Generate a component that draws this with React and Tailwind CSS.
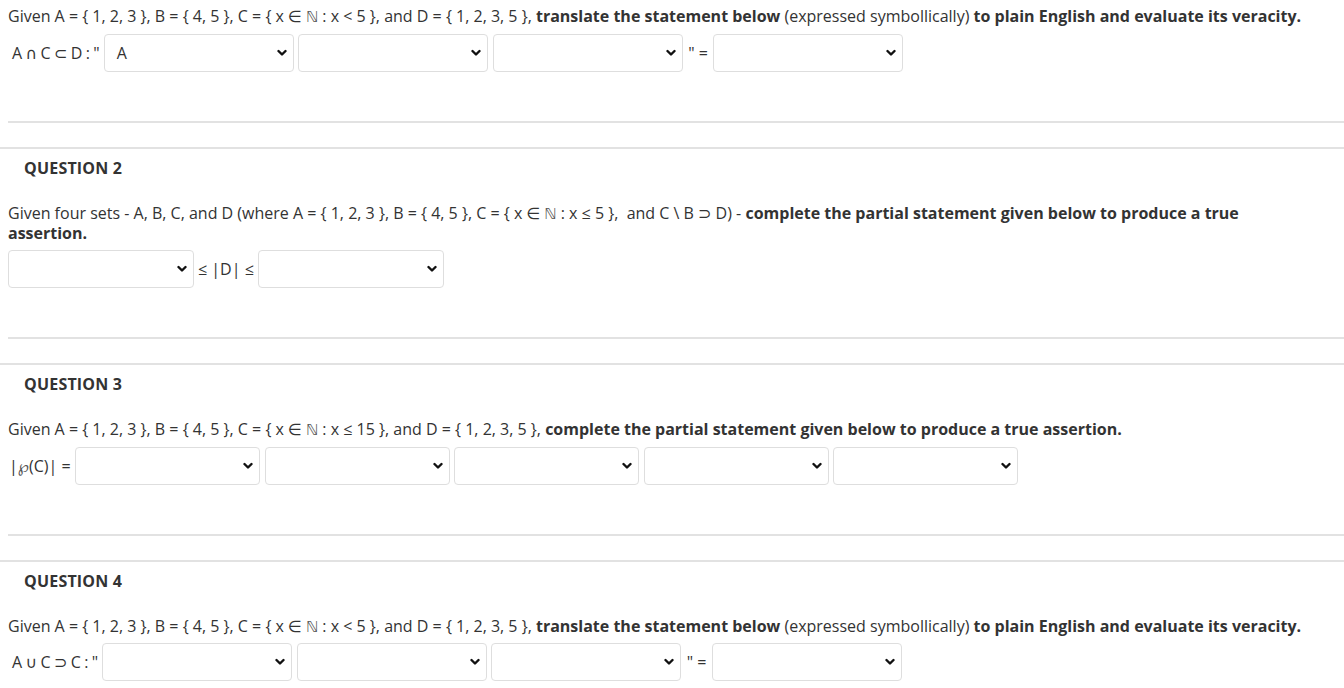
import React from 'react';

const Chevron = () => (
  <svg width="10" height="8" viewBox="0 0 10 8" className="shrink-0">
    <path d="M1.5 2 L5 5.5 L8.5 2" fill="none" stroke="#111" strokeWidth="2.4" strokeLinecap="round" strokeLinejoin="round" />
  </svg>
);

const Select = ({ width = 'w-[190px]', value = '' }) => (
  <div className={`${width} h-[38px] shrink-0 flex items-center justify-between pl-3 pr-[6px] bg-white border border-[#dedede] rounded-[4px]`}>
    <span className="text-[16px] text-[#333]">{value}</span>
    <Chevron />
  </div>
);

const Separators = () => (
  <>
    <div className="ml-2 h-[2px] bg-[#e2e2e2] mt-[49px]" />
    <div className="h-[2px] bg-[#e2e2e2] mt-6" />
  </>
);

const Heading = ({ children }) => (
  <h2 className="pl-6 pt-[7px] text-[16px] leading-6 font-bold text-[#333] tracking-[0.2px]">{children}</h2>
);

const n = <span style={{ fontFamily: '"DejaVu Sans", sans-serif' }} className="text-[#555] text-[15px] leading-[19px]">ℕ</span>;

export default function App() {
  return (
    <div className="bg-white min-h-[688px] text-[#333] text-[16px] leading-[19px]" style={{ fontFamily: '"Open Sans", "DejaVu Sans", sans-serif' }}>
      {/* question 1 */}
      <div className="px-2 pt-[7px]">
        <p>
          Given A = {'{'} 1, 2, 3 {'}'}, B = {'{'} 4, 5 {'}'}, C = {'{'} x ∈ {n} : x &lt; 5 {'}'}, and D = {'{'} 1, 2, 3, 5 {'}'},{' '}
          <b>translate the statement below</b> (expressed symbollically) <b>to plain English and evaluate its veracity.</b>
        </p>
        <div className="flex items-center gap-[4.5px] mt-[7px]">
          <span className="pl-[4px] tracking-[-0.4px]">A ∩ C ⊂ D : "</span>
          <Select value="A" />
          <Select />
          <Select />
          <span className="px-[1px]">" =</span>
          <Select />
        </div>
      </div>
      <Separators />

      {/* question 2 */}
      <Heading>QUESTION 2</Heading>
      <div className="px-2 mt-6">
        <p className="pr-[90px]">
          Given four sets - A, B, C, and D (where A = {'{'} 1, 2, 3 {'}'}, B = {'{'} 4, 5 {'}'}, C = {'{'} x ∈ {n} : x ≤ 5 {'}'},&nbsp; and C \ B ⊃ D) -{' '}
          <b>complete the partial statement given below to produce a true assertion.</b>
        </p>
        <div className="flex items-center gap-[4px] mt-[7px]">
          <Select width="w-[186px]" />
          <span>≤ |D| ≤</span>
          <Select width="w-[186px]" />
        </div>
      </div>
      <Separators />

      {/* question 3 */}
      <Heading>QUESTION 3</Heading>
      <div className="px-2 mt-6">
        <p>
          Given A = {'{'} 1, 2, 3 {'}'}, B = {'{'} 4, 5 {'}'}, C = {'{'} x ∈ {n} : x ≤ 15 {'}'}, and D = {'{'} 1, 2, 3, 5 {'}'},{' '}
          <b>complete the partial statement given below to produce a true assertion.</b>
        </p>
        <div className="flex items-center gap-[4.5px] mt-[7px]">
          <span className="pl-[1px]">|<span className="italic text-[#555]" style={{ fontFamily: '"DejaVu Sans", sans-serif' }}>℘</span>(C)| =</span>
          <Select width="w-[185px]" />
          <Select width="w-[185px]" />
          <Select width="w-[185px]" />
          <Select width="w-[185px]" />
          <Select width="w-[185px]" />
        </div>
      </div>
      <Separators />

      {/* question 4 */}
      <Heading>QUESTION 4</Heading>
      <div className="px-2 mt-6 pb-4">
        <p>
          Given A = {'{'} 1, 2, 3 {'}'}, B = {'{'} 4, 5 {'}'}, C = {'{'} x ∈ {n} : x &lt; 5 {'}'}, and D = {'{'} 1, 2, 3, 5 {'}'},{' '}
          <b>translate the statement below</b> (expressed symbollically) <b>to plain English and evaluate its veracity.</b>
        </p>
        <div className="flex items-center gap-[4.5px] mt-[6px]">
          <span className="pl-[4px] tracking-[-0.4px]">A ∪ C ⊃ C : "</span>
          <Select />
          <Select />
          <Select />
          <span className="px-[1px]">" =</span>
          <Select />
        </div>
      </div>
    </div>
  );
}
